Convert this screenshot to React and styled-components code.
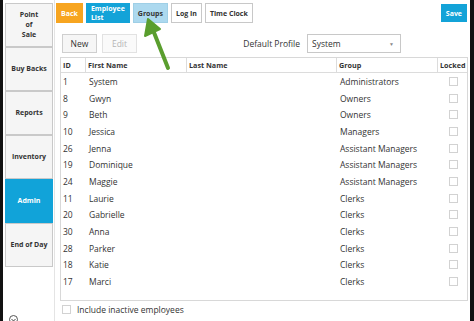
import React from 'react'
import styled, { createGlobalStyle } from 'styled-components'

const Global = createGlobalStyle`
  html, body { margin: 0; padding: 0; background: #fff; }
  body { font-family: "Open Sans", "Noto Sans", sans-serif; }
  * { box-sizing: border-box; }
`

const Frame = styled.div`
  position: relative;
  display: flex;
  width: 474px;
  height: 321px;
  border-left: 3px solid #111;
  border-right: 4px solid #111;
  background: #fff;
  overflow: hidden;
`

const Sidebar = styled.div`
  display: flex;
  flex-direction: column;
  width: 48px;
  margin-left: 2px;
  padding-top: 3px;
  position: relative;
`

const Tab = styled.div`
  height: 44px;
  display: flex;
  align-items: center;
  justify-content: center;
  text-align: center;
  font-size: 7px;
  font-weight: 700;
  line-height: 10px;
  color: ${p => (p.active ? '#fff' : '#333')};
  background: ${p => (p.active ? '#11a3d9' : '#f5f5f5')};
  border: 1px solid ${p => (p.active ? '#11a3d9' : '#c9c9c9')};
`

const Expander = styled.div`
  position: absolute;
  left: 4px;
  bottom: -3px;
  width: 9px;
  height: 9px;
  border: 1px solid #555;
  border-radius: 50%;
  display: flex;
  align-items: center;
  justify-content: center;
`

const Main = styled.div`
  flex: 1;
  display: flex;
  flex-direction: column;
  padding: 3px 2px 0 1px;
  margin-left: 1px;
  border-left: 1px solid #e4e4e4;
`

const Toolbar = styled.div`
  display: flex;
  gap: 3px;
  height: 20px;
`

const TopButton = styled.div`
  height: 20px;
  padding: 0 ${p => p.pad || 4}px;
  display: flex;
  align-items: center;
  font-size: 7px;
  font-weight: 700;
  line-height: 9px;
  color: ${p => p.color || '#333'};
  background: ${p => p.bg || '#fff'};
  border: 1px solid ${p => p.border || '#c8c8c8'};
`

const Spacer = styled.div`
  flex: 1;
`

const SaveButton = styled(TopButton)`
  margin-top: 1px;
  height: 18px;
  margin-right: 1px;
`

const Actions = styled.div`
  display: flex;
  align-items: center;
  height: 19px;
  margin: 11px 0 4px 6px;
`

const ActionButton = styled.div`
  width: 35px;
  height: 19px;
  margin-right: 5px;
  display: flex;
  align-items: center;
  justify-content: center;
  font-size: 8.5px;
  color: ${p => (p.disabled ? '#b5b5b5' : '#333')};
  background: ${p => (p.disabled ? '#fafafa' : '#f6f6f6')};
  border: 1px solid ${p => (p.disabled ? '#e2e2e2' : '#cfcfcf')};
`

const ProfileLabel = styled.div`
  margin-left: auto;
  font-size: 8.5px;
  color: #333;
  margin-right: 7px;
`

const Select = styled.div`
  width: 94px;
  height: 19px;
  margin-right: 67px;
  display: flex;
  align-items: center;
  justify-content: space-between;
  padding: 0 6px 0 4px;
  font-size: 8.5px;
  color: #333;
  border: 1px solid #c8c8c8;
  background: #fff;
  span { font-size: 5px; color: #888; }
`

const TableBox = styled.div`
  height: 244px;
  border: 1px solid #d8d8d8;
  margin-left: 4px;
`

const Grid = styled.div`
  display: grid;
  grid-template-columns: 24px 101px 150px 101px 1fr;
`

const HeadCell = styled.div`
  height: 15px;
  display: flex;
  align-items: center;
  padding-left: 2px;
  font-size: 7.2px;
  font-weight: 700;
  color: #333;
  border-bottom: 1px solid #dcdcdc;
  border-left: ${p => (p.first ? 'none' : '1px solid #dcdcdc')};
`

const Cell = styled.div`
  height: 16.7px;
  display: flex;
  align-items: center;
  padding-left: ${p => p.pad ?? 3}px;
  justify-content: ${p => (p.center ? 'center' : 'flex-start')};
  font-size: 8.5px;
  color: #333;
  white-space: nowrap;
`

const Box = styled.div`
  width: 9px;
  height: 9px;
  border: 1px solid #d2d2d2;
  background: #fff;
`

const Footer = styled.div`
  display: flex;
  align-items: center;
  gap: 6px;
  margin: 3px 0 0 6px;
  font-size: 8.5px;
  color: #333;
`

const Arrow = styled.svg`
  position: absolute;
  left: 140px;
  top: 16px;
`

const rows = [
  [1, 'System', 'Administrators'],
  [8, 'Gwyn', 'Owners'],
  [9, 'Beth', 'Owners'],
  [10, 'Jessica', 'Managers'],
  [26, 'Jenna', 'Assistant Managers'],
  [19, 'Dominique', 'Assistant Managers'],
  [24, 'Maggie', 'Assistant Managers'],
  [11, 'Laurie', 'Clerks'],
  [20, 'Gabrielle', 'Clerks'],
  [30, 'Anna', 'Clerks'],
  [28, 'Parker', 'Clerks'],
  [18, 'Katie', 'Clerks'],
  [17, 'Marci', 'Clerks'],
]

const tabs = [
  ['Point', 'of', 'Sale'],
  ['Buy Backs'],
  ['Reports'],
  ['Inventory'],
  ['Admin'],
  ['End of Day'],
]

export default function App() {
  return (
    <>
      <Global />
      <Frame>
        <Sidebar>
          {tabs.map((t, i) => (
            <Tab key={i} active={t[0] === 'Admin'}>
              <div>{t.map((l, j) => <div key={j}>{l}</div>)}</div>
            </Tab>
          ))}
          <Expander>
            <svg width="5" height="4" viewBox="0 0 5 4">
              <path d="M0.5 1 L2.5 3 L4.5 1" stroke="#444" strokeWidth="1" fill="none" />
            </svg>
          </Expander>
        </Sidebar>
        <Main>
          <Toolbar>
            <TopButton bg="#f7a520" border="#f7a520" color="#fff" pad={4}>Back</TopButton>
            <TopButton bg="#13a3d8" border="#13a3d8" color="#fff" pad={4}>
              <div>Employee<br />List</div>
            </TopButton>
            <TopButton bg="#acd9ef" border="#9fcfe6" pad={4}>Groups</TopButton>
            <TopButton pad={4}>Log In</TopButton>
            <TopButton pad={4}>Time Clock</TopButton>
            <Spacer />
            <SaveButton bg="#13a3d8" border="#13a3d8" color="#fff" pad={4}>Save</SaveButton>
          </Toolbar>
          <Actions>
            <ActionButton>New</ActionButton>
            <ActionButton disabled>Edit</ActionButton>
            <ProfileLabel>Default Profile</ProfileLabel>
            <Select>System<span>▼</span></Select>
          </Actions>
          <TableBox>
            <Grid>
              <HeadCell first>ID</HeadCell>
              <HeadCell>First Name</HeadCell>
              <HeadCell>Last Name</HeadCell>
              <HeadCell>Group</HeadCell>
              <HeadCell>Locked</HeadCell>
              {rows.map(([id, name, group]) => (
                <React.Fragment key={id}>
                  <Cell pad={2}>{id}</Cell>
                  <Cell pad={4}>{name}</Cell>
                  <Cell />
                  <Cell pad={4}>{group}</Cell>
                  <Cell center><Box /></Cell>
                </React.Fragment>
              ))}
            </Grid>
          </TableBox>
          <Footer>
            <Box />
            Include inactive employees
          </Footer>
        </Main>
        <Arrow width="32" height="56" viewBox="0 0 32 56">
          <path d="M25 52 L10 14" stroke="#5a9e2e" strokeWidth="4" strokeLinecap="round" fill="none" />
          <path d="M5 3 L2 20 L17 13 Z" fill="#5a9e2e" stroke="#5a9e2e" strokeWidth="2" strokeLinejoin="round" />
        </Arrow>
      </Frame>
    </>
  )
}
